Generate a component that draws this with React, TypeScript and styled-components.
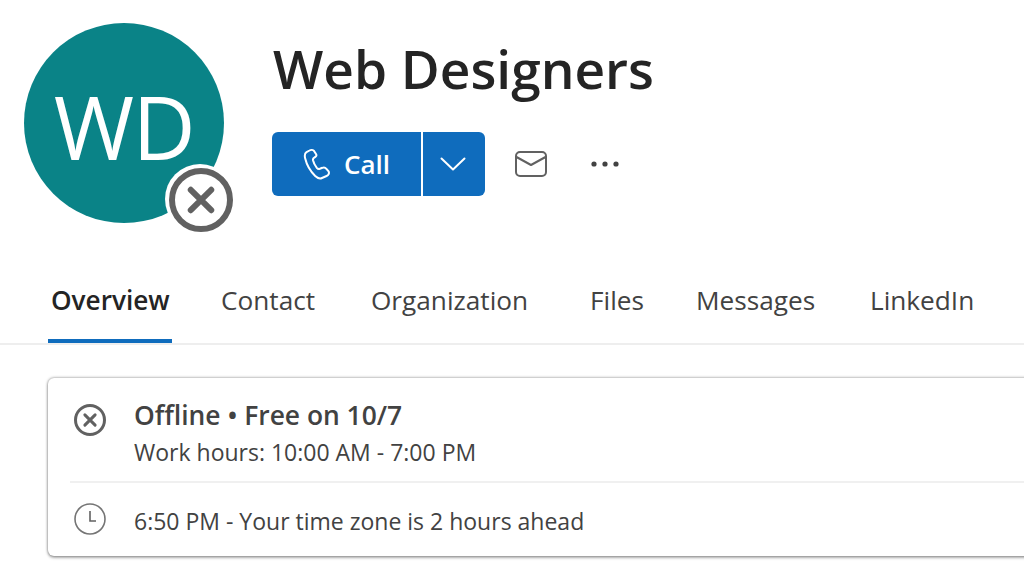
import styled, { createGlobalStyle } from "styled-components";

const GlobalStyle = createGlobalStyle`
  html, body {
    margin: 0;
    padding: 0;
    background: #fff;
    overflow: hidden;
    font-family: "Open Sans", "Noto Sans", sans-serif;
  }
`;

const Page = styled.div`
  width: 1024px;
  height: 576px;
  overflow: hidden;
  padding-top: 23px;
  box-sizing: border-box;
`;

const Header = styled.header`
  display: flex;
  padding-left: 24px;
  gap: 48px;
  height: 222px;
`;

const Avatar = styled.div`
  position: relative;
  width: 200px;
  height: 200px;
  border-radius: 50%;
  background: #0a8387;
  color: #fff;
  display: flex;
  align-items: center;
  justify-content: center;
  padding-top: 6px;
  box-sizing: border-box;
  font-size: 87px;
  letter-spacing: -1.5px;
  flex-shrink: 0;
`;

const Presence = styled.div`
  position: absolute;
  left: 141px;
  top: 141px;
  width: 70px;
  height: 70px;
  border-radius: 50%;
  background: #fff;
  display: flex;
  align-items: center;
  justify-content: center;
  padding-left: 2px;
  padding-top: 1px;
  box-sizing: border-box;
`;

const HeaderBody = styled.div`
  display: flex;
  flex-direction: column;
`;

const Title = styled.h1`
  margin: 0;
  padding-top: 14px;
  padding-left: 1px;
  font-size: 53.2px;
  line-height: 63px;
  font-weight: 600;
  color: #242424;
`;

const Actions = styled.div`
  display: flex;
  align-items: center;
  margin-top: 32px;
`;

const SplitButton = styled.div`
  display: flex;
  height: 64px;
  border-radius: 6px;
  overflow: hidden;
  background: #0f6cbd;
  color: #fff;
`;

const CallPart = styled.div`
  width: 149px;
  display: flex;
  align-items: center;
  justify-content: center;
  gap: 13px;
  font-size: 26px;
  font-weight: 600;
`;

const CaretPart = styled.div`
  width: 64px;
  border-left: 2px solid #fff;
  display: flex;
  align-items: center;
  justify-content: center;
  padding-right: 2px;
  box-sizing: border-box;
`;

const IconAction = styled.div<{ $space: number }>`
  display: flex;
  margin-left: ${(p) => p.$space}px;
`;

const Tabs = styled.nav`
  display: flex;
  align-items: stretch;
  height: 98px;
  padding-left: 48px;
  border-bottom: 2px solid #eeeeee;
`;

const Tab = styled.div<{ $active?: boolean; $width: number }>`
  position: relative;
  width: ${(p) => p.$width}px;
  flex-shrink: 0;
  padding-left: 3px;
  padding-top: 36px;
  box-sizing: border-box;
  font-size: 26.2px;
  line-height: 38px;
  white-space: nowrap;
  color: ${(p) => (p.$active ? "#242424" : "#424242")};
  font-weight: ${(p) => (p.$active ? 600 : 400)};

  ${(p) =>
    p.$active &&
    `&::after {
      content: "";
      position: absolute;
      left: 0;
      bottom: 0;
      width: 124px;
      height: 4px;
      background: #0f6cbd;
    }`}
`;

const Card = styled.section`
  margin: 33px 0 0 48px;
  width: 1100px;
  height: 178px;
  box-sizing: border-box;
  background: #fff;
  border-radius: 6px;
  box-shadow: 0 0 3px rgba(0, 0, 0, 0.5), 0 2px 3px rgba(0, 0, 0, 0.25);
  padding: 0 0 0 22px;
`;

const CardRow = styled.div<{ $height: number; $divider?: boolean }>`
  display: flex;
  align-items: center;
  height: ${(p) => p.$height}px;
  padding-left: 4px;
  box-sizing: border-box;
  border-bottom: ${(p) => (p.$divider ? "2px solid #f0f0f0" : "none")};
`;

const RowIcon = styled.div<{ $top: number }>`
  display: flex;
  flex-shrink: 0;
  align-self: flex-start;
  width: 60px;
  margin-top: ${(p) => p.$top}px;
`;

const RowText = styled.div<{ $top: number }>`
  padding-top: ${(p) => p.$top}px;
`;

const Status = styled.div`
  font-size: 26.4px;
  line-height: 37px;
  font-weight: 600;
  color: #424242;
`;

const Detail = styled.div`
  font-size: 23px;
  line-height: 36px;
  color: #424242;
`;

const PhoneIcon = () => (
  <svg width="28" height="32" viewBox="0 0 28 32" fill="none" stroke="#fff" strokeWidth="2" strokeLinejoin="round">
    <path d="M6.5 2.5 L3.5 4.2 C1.6 5.4 1.6 8.2 2.2 10.6 C3.6 16.4 7.6 23.6 12.2 28 C14.2 29.9 16.8 31 19 30 L23.6 28 C25.8 27 26.6 24.8 25.4 23.2 L23.4 20.8 C22.4 19.6 20.8 19.2 19.4 19.8 L16.8 20.8 C15.6 21.2 14.6 20.8 13.8 19.8 C12 17.4 10.6 14.8 10 12.2 C9.8 11.2 10.2 10.2 11.2 9.6 L12.4 8.8 C13.4 8.2 13.6 7 13 6 L11.2 3.2 C10.2 1.8 8 1.6 6.5 2.5 Z" />
  </svg>
);

const CaretIcon = () => (
  <svg width="26" height="14" viewBox="0 0 26 14" fill="none" stroke="#fff" strokeWidth="2" strokeLinecap="round" strokeLinejoin="round">
    <path d="M1.5 1.5 L13 12.5 L24.5 1.5" />
  </svg>
);

const MailIcon = () => (
  <svg width="32" height="26" viewBox="0 0 32 26" fill="none" stroke="#616161" strokeWidth="2" strokeLinejoin="round" strokeLinecap="round">
    <rect x="1" y="1" width="30" height="24" rx="4" />
    <path d="M1.5 6 L16 14 L30.5 6" />
  </svg>
);

const DotsIcon = () => (
  <svg width="28" height="6" viewBox="0 0 28 6" fill="#424242">
    <circle cx="3" cy="3" r="2.6" />
    <circle cx="14" cy="3" r="2.6" />
    <circle cx="25" cy="3" r="2.6" />
  </svg>
);

const OfflineIcon = ({ size, stroke, cross }: { size: number; stroke: number; cross: number }) => {
  const c = size / 2;
  const d = size * 0.16;
  return (
    <svg width={size} height={size} viewBox={`0 0 ${size} ${size}`} fill="none" stroke="#616161" strokeLinecap="round">
      <circle cx={c} cy={c} r={c - stroke / 2} strokeWidth={stroke} />
      <path d={`M${c - d} ${c - d} L${c + d} ${c + d} M${c + d} ${c - d} L${c - d} ${c + d}`} strokeWidth={cross} />
    </svg>
  );
};

const ClockIcon = () => (
  <svg width="32" height="32" viewBox="0 0 32 32" fill="none" stroke="#757575" strokeWidth="1.6">
    <circle cx="16" cy="16" r="15" />
    <path d="M16 8 L16 18 L22 18" stroke="#616161" />
  </svg>
);

const tabs = [
  { label: "Contact", width: 150 },
  { label: "Organization", width: 219 },
  { label: "Files", width: 106 },
  { label: "Messages", width: 174 },
  { label: "LinkedIn", width: 120 },
];

export default function App() {
  return (
    <Page>
      <GlobalStyle />
      <Header>
        <Avatar>
          WD
          <Presence>
            <OfflineIcon size={64} stroke={6} cross={6} />
          </Presence>
        </Avatar>
        <HeaderBody>
          <Title>Web Designers</Title>
          <Actions>
            <SplitButton>
              <CallPart>
                <PhoneIcon />
                Call
              </CallPart>
              <CaretPart>
                <CaretIcon />
              </CaretPart>
            </SplitButton>
            <IconAction $space={30}>
              <MailIcon />
            </IconAction>
            <IconAction $space={44}>
              <DotsIcon />
            </IconAction>
          </Actions>
        </HeaderBody>
      </Header>
      <Tabs>
        <Tab $active $width={170}>
          Overview
        </Tab>
        {tabs.map((t) => (
          <Tab key={t.label} $width={t.width}>
            {t.label}
          </Tab>
        ))}
      </Tabs>
      <Card>
        <CardRow $height={105} $divider>
          <RowIcon $top={26}>
            <OfflineIcon size={32} stroke={3} cross={3} />
          </RowIcon>
          <RowText $top={7}>
            <Status>Offline • Free on 10/7</Status>
            <Detail>Work hours: 10:00 AM - 7:00 PM</Detail>
          </RowText>
        </CardRow>
        <CardRow $height={73}>
          <RowIcon $top={20}>
            <ClockIcon />
          </RowIcon>
          <RowText $top={3}>
            <Detail>6:50 PM - Your time zone is 2 hours ahead</Detail>
          </RowText>
        </CardRow>
      </Card>
    </Page>
  );
}
